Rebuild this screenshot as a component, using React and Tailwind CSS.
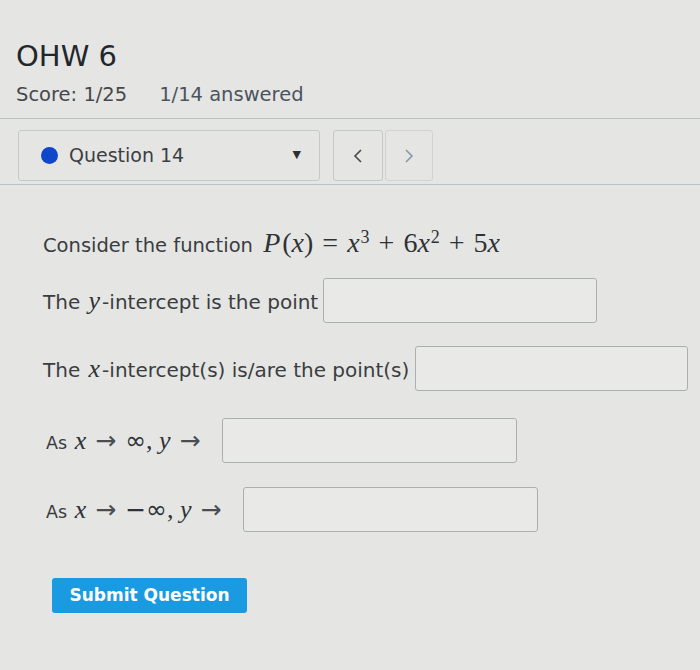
import React from 'react';

const sans = { fontFamily: '"DejaVu Sans", Verdana, sans-serif' };
const serif = '[font-family:"Liberation_Serif",serif]';

function M({ children, cls = '' }) {
  return <span className={`${serif} italic text-[26px] text-[#2f3236] ${cls}`}>{children}</span>;
}

function R({ children, cls = '' }) {
  return <span className={`${serif} text-[26px] text-[#2f3236] ${cls}`}>{children}</span>;
}

function Arrow() {
  return <span className="[font-family:'DejaVu_Sans',sans-serif] text-[25px] text-[#4a4d52] mx-[9px]">→</span>;
}

function Inf({ minus }) {
  return (
    <span className="[font-family:'DejaVu_Sans',sans-serif] text-[25px] text-[#2f3236]">
      {minus ? '−' : ''}∞
    </span>
  );
}

function Box({ w }) {
  return <div className={`h-[45px] ${w} shrink-0 rounded-[3px] border border-[#a9b0b3] bg-[#e9eae8]`} />;
}

export default function App() {
  return (
    <div style={sans} className="w-[700px] h-[670px] overflow-hidden bg-[#e5e6e3] text-[#3a3d41]">
      <div className="pl-[16px] pt-[38px]">
        <h1 className="text-[29px] leading-[36px] text-[#24262d]">OHW 6</h1>
        <div className="mt-[9px] flex gap-[32px] text-[19.5px] leading-[24px] text-[#45484d]">
          <span>Score: 1/25</span>
          <span className="text-[#4c5360]">1/14 answered</span>
        </div>
      </div>

      <div className="mt-[11px] border-t border-b border-[#b9c0c6] pt-[11px] pb-[3px] pl-[18px] flex gap-[13px]">
        <div className="w-[302px] h-[51px] rounded-[3px] border border-[#c4c9cc] flex items-center pl-[22px] pr-[18px]">
          <span className="w-[17px] h-[17px] rounded-full bg-[#1046c9]" />
          <span className="ml-[11px] text-[19px] text-[#3b3e43]">Question 14</span>
          <span className="ml-auto text-[11px] text-[#2d2f33]">▼</span>
        </div>
        <div className="flex gap-[2px]">
          <div className="w-[50px] h-[51px] rounded-[3px] border border-[#c2c7cb] flex items-center justify-center">
            <svg width="12" height="14" viewBox="0 0 12 14"><path d="M9 1L3 7l6 6" fill="none" stroke="#44474c" strokeWidth="1.6" /></svg>
          </div>
          <div className="w-[48px] h-[51px] rounded-[3px] border border-[#cfd3d6] flex items-center justify-center">
            <svg width="12" height="14" viewBox="0 0 12 14"><path d="M3 1l6 6-6 6" fill="none" stroke="#8a97a8" strokeWidth="1.6" /></svg>
          </div>
        </div>
      </div>

      <div className="pl-[43px] pt-[37px] text-[19.5px] text-[#3a3d41]">
        <div className="flex items-baseline h-[30px] whitespace-nowrap">
          <span>Consider the function&nbsp;</span>
          <M cls="ml-[4px] text-[28px]">P</M><R cls="ml-[2px] text-[28px]">(</R><M cls="text-[28px]">x</M><R cls="text-[28px]">)</R>
          <R cls="mx-[9px] text-[28px]">=</R>
          <M cls="text-[28px]">x</M><R><sup className="text-[18px] ml-[1px]">3</sup></R>
          <R cls="mx-[9px] text-[28px]">+</R>
          <R cls="text-[28px]">6</R><M cls="text-[28px]">x</M><R><sup className="text-[18px] ml-[1px]">2</sup></R>
          <R cls="mx-[9px] text-[28px]">+</R>
          <R cls="text-[28px]">5</R><M cls="text-[28px]">x</M>
        </div>

        <div className="mt-[26px] flex items-center gap-[5px]">
          <span className="flex items-baseline whitespace-nowrap text-[20px]">The&nbsp;<M cls="mx-[2px]">y</M>-intercept is the point</span>
          <Box w="w-[274px]" />
        </div>

        <div className="mt-[23px] flex items-center gap-[6px]">
          <span className="flex items-baseline whitespace-nowrap text-[20px]">The&nbsp;<M cls="mx-[2px]">x</M>-intercept(s) is/are the point(s)</span>
          <Box w="w-[273px]" />
        </div>

        <div className="mt-[27px] flex items-center gap-[13px] ml-[3px]">
          <span className="flex items-baseline whitespace-nowrap text-[17.5px]">As&nbsp;<M cls="ml-[2px]">x</M><Arrow /><Inf /><R>,&nbsp;</R><M>y</M><Arrow /></span>
          <Box w="w-[295px]" />
        </div>

        <div className="mt-[24px] flex items-center gap-[13px] ml-[3px]">
          <span className="flex items-baseline whitespace-nowrap text-[17.5px]">As&nbsp;<M cls="ml-[2px]">x</M><Arrow /><Inf minus /><R>,&nbsp;</R><M>y</M><Arrow /></span>
          <Box w="w-[295px]" />
        </div>

        <button className="mt-[46px] ml-[9px] w-[195px] h-[35px] rounded-[3px] bg-[#1a9ae0] text-white font-bold text-[17px] flex items-center justify-center">
          Submit Question
        </button>
      </div>
    </div>
  );
}
